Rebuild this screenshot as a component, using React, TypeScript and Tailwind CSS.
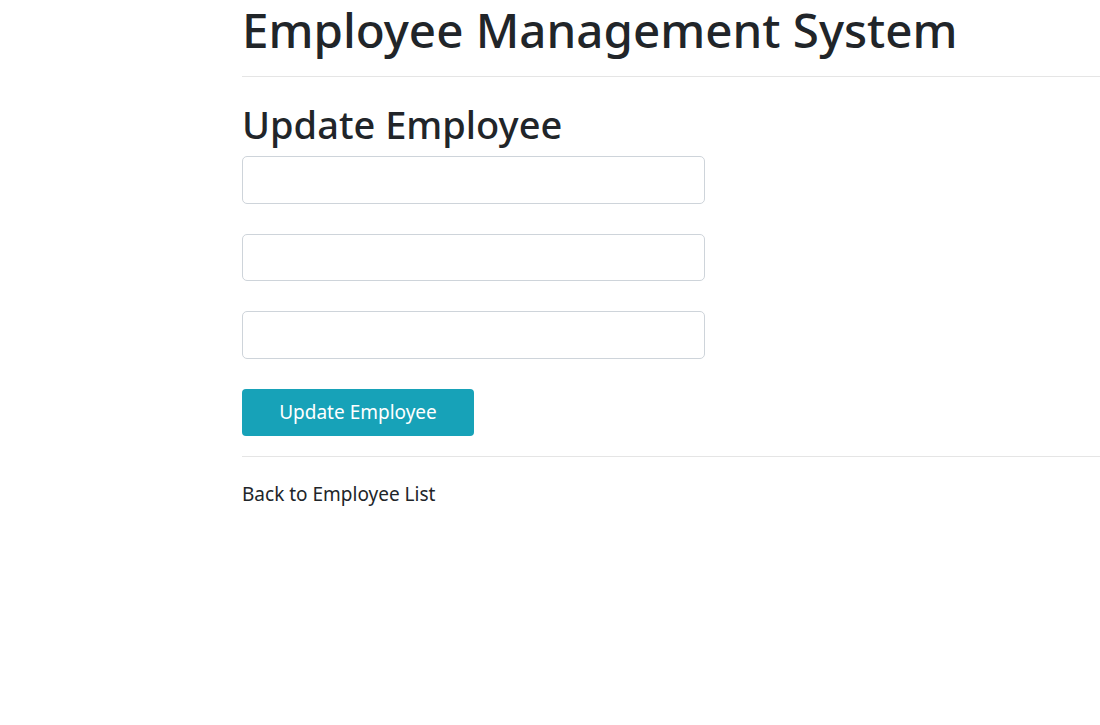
import React from "react";

export default function App() {
  const font = { fontFamily: '"Noto Sans", "Open Sans", sans-serif' };
  return (
    <div className="min-h-[725px] bg-white text-[#212529]" style={font}>
      <div className="ml-[242px]">
        <h1 className="text-[47.5px] leading-[60px] font-medium">Employee Management System</h1>
        <div className="h-px bg-[#e5e5e5] mt-[16px]" />
        <h2 className="text-[38px] leading-[46px] font-medium mt-[24px]">Update Employee</h2>
        <form className="mt-[9px] flex flex-col w-[463px]">
          <input className="h-[48px] border border-[#ced4da] rounded-[5px] px-4 outline-none" />
          <input className="h-[47px] border border-[#ced4da] rounded-[5px] px-4 mt-[30px] outline-none" />
          <input className="h-[48px] border border-[#ced4da] rounded-[5px] px-4 mt-[30px] outline-none" />
          <button type="button" className="mt-[30px] w-[232px] h-[47px] bg-[#17a2b8] text-white rounded-[4px] text-[19px] text-center">Update Employee</button>
        </form>
        <div className="h-px bg-[#e5e5e5] mt-[20px]" />
        <a className="block mt-[23px] text-[19px] text-[#212529]">Back to Employee List</a>
      </div>
    </div>
  );
}
